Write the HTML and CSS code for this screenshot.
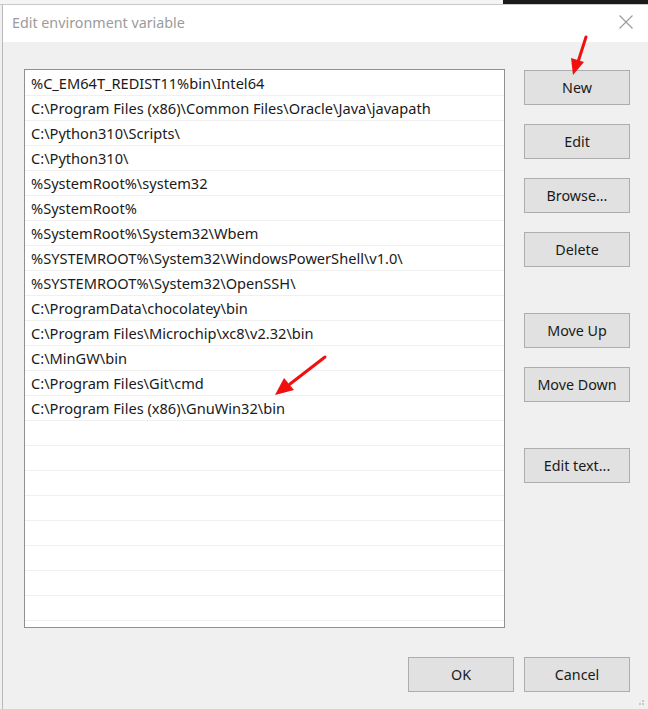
FILE: index.html
```html
<!DOCTYPE html>
<html lang="en">
<head>
    <meta charset="UTF-8">
    <title>Edit environment variable</title>
    <link rel="stylesheet" href="styles.css">
</head>
<body>
    <div class="backdrop">
        <div class="backdrop-light"></div>
        <div class="backdrop-dark"></div>
    </div>
    <div class="dialog">
        <div class="titlebar">
            <span class="title">Edit environment variable</span>
            <svg class="close" width="14" height="14" viewBox="0 0 14 14">
                <path d="M0.5 0.5 L13.5 13.5 M13.5 0.5 L0.5 13.5" stroke="#9a9a9a" stroke-width="1.1" fill="none"/>
            </svg>
        </div>
        <div class="body">
            <div class="content">
                <ul class="paths">
                    <li>%C_EM64T_REDIST11%bin\Intel64</li>
                    <li>C:\Program Files (x86)\Common Files\Oracle\Java\javapath</li>
                    <li>C:\Python310\Scripts\</li>
                    <li>C:\Python310\</li>
                    <li>%SystemRoot%\system32</li>
                    <li>%SystemRoot%</li>
                    <li>%SystemRoot%\System32\Wbem</li>
                    <li>%SYSTEMROOT%\System32\WindowsPowerShell\v1.0\</li>
                    <li>%SYSTEMROOT%\System32\OpenSSH\</li>
                    <li>C:\ProgramData\chocolatey\bin</li>
                    <li>C:\Program Files\Microchip\xc8\v2.32\bin</li>
                    <li>C:\MinGW\bin</li>
                    <li>C:\Program Files\Git\cmd</li>
                    <li>C:\Program Files (x86)\GnuWin32\bin</li>
                    <li></li>
                    <li></li>
                    <li></li>
                    <li></li>
                    <li></li>
                    <li></li>
                    <li></li>
                    <li></li>
                    <li class="last"></li>
                </ul>
                <div class="actions">
                    <button class="btn">New</button>
                    <button class="btn">Edit</button>
                    <button class="btn">Browse...</button>
                    <button class="btn">Delete</button>
                    <button class="btn move-up">Move Up</button>
                    <button class="btn">Move Down</button>
                    <button class="btn edit-text">Edit text...</button>
                </div>
            </div>
            <div class="footer">
                <button class="btn">OK</button>
                <button class="btn">Cancel</button>
            </div>
        </div>
        <svg class="grip" width="8" height="8" viewBox="0 0 8 8">
            <rect x="5" y="0" width="2" height="2" fill="#c8c8c8"/>
            <rect x="2" y="3" width="2" height="2" fill="#c8c8c8"/>
            <rect x="5" y="3" width="2" height="2" fill="#c8c8c8"/>
        </svg>
    </div>
    <!-- annotation arrows drawn on top of the screenshot -->
    <svg class="arrows" width="648" height="709" viewBox="0 0 648 709">
        <line x1="586" y1="37" x2="578" y2="62" stroke="#f01010" stroke-width="3" stroke-linecap="round"/>
        <polygon points="573,75 571,58 584,62" fill="#f01010"/>
        <line x1="325" y1="357" x2="290" y2="384" stroke="#f01010" stroke-width="3" stroke-linecap="round"/>
        <polygon points="275,395 284,378 294,390" fill="#f01010"/>
    </svg>
</body>
</html>
```

FILE: styles.css
```css
body {
    margin: 0;
    width: 648px;
    height: 709px;
    overflow: hidden;
    background-color: #f0f0f0;
    font-family: "Noto Sans", "Open Sans", sans-serif;
    position: relative;
}
.backdrop {
    display: flex;
    height: 4px;
    border-bottom: 1px solid #c9c9c9;
}
.backdrop-light {
    flex: 1;
    background-color: #f4f4f4;
}
.backdrop-dark {
    width: 145px;
    background-color: #1a1a1a;
}
.dialog {
    margin-left: 2px;
    border-left: 1px solid #b9b9b9;
    height: 704px;
    display: flex;
    flex-direction: column;
    position: relative;
}
.titlebar {
    height: 37px;
    background-color: #ffffff;
    display: flex;
    align-items: center;
    justify-content: space-between;
    padding: 0 15px 0 9px;
}
.title {
    font-size: 14.3px;
    color: #9b9b9b;
    margin-top: -2px;
}
.close {
    margin-top: -3px;
}
.body {
    flex: 1;
    padding: 27px 18px 0 21px;
}
.content {
    display: flex;
    gap: 19px;
}
.paths {
    list-style-type: none;
    margin: 0;
    padding: 1px 0 0 0;
    width: 479px;
    height: 556px;
    background-color: #ffffff;
    border: 1px solid #8f8f94;
    box-sizing: content-box;
    overflow: hidden;
}
.paths li {
    height: 24px;
    line-height: 24px;
    border-bottom: 1px solid #f0f0f0;
    padding-left: 6px;
    font-size: 14.6px;
    color: #1a1a1a;
    white-space: nowrap;
}
.paths li.last {
    border-bottom-color: #f7f7f7;
}
.actions {
    display: flex;
    flex-direction: column;
    gap: 19px;
    padding-top: 1px;
}
.btn {
    width: 106px;
    height: 35px;
    background-color: #e1e1e1;
    border: 1px solid #adadad;
    font-family: "Noto Sans", "Open Sans", sans-serif;
    font-size: 14.3px;
    color: #1a1a1a;
    padding: 0;
}
.move-up {
    margin-top: 27px;
}
.edit-text {
    margin-top: 27px;
}
.footer {
    display: flex;
    justify-content: flex-end;
    gap: 10px;
    margin-top: 29px;
}
.grip {
    position: absolute;
    right: 3px;
    bottom: 1px;
}
.arrows {
    position: absolute;
    left: 0;
    top: 0;
    pointer-events: none;
}
```
